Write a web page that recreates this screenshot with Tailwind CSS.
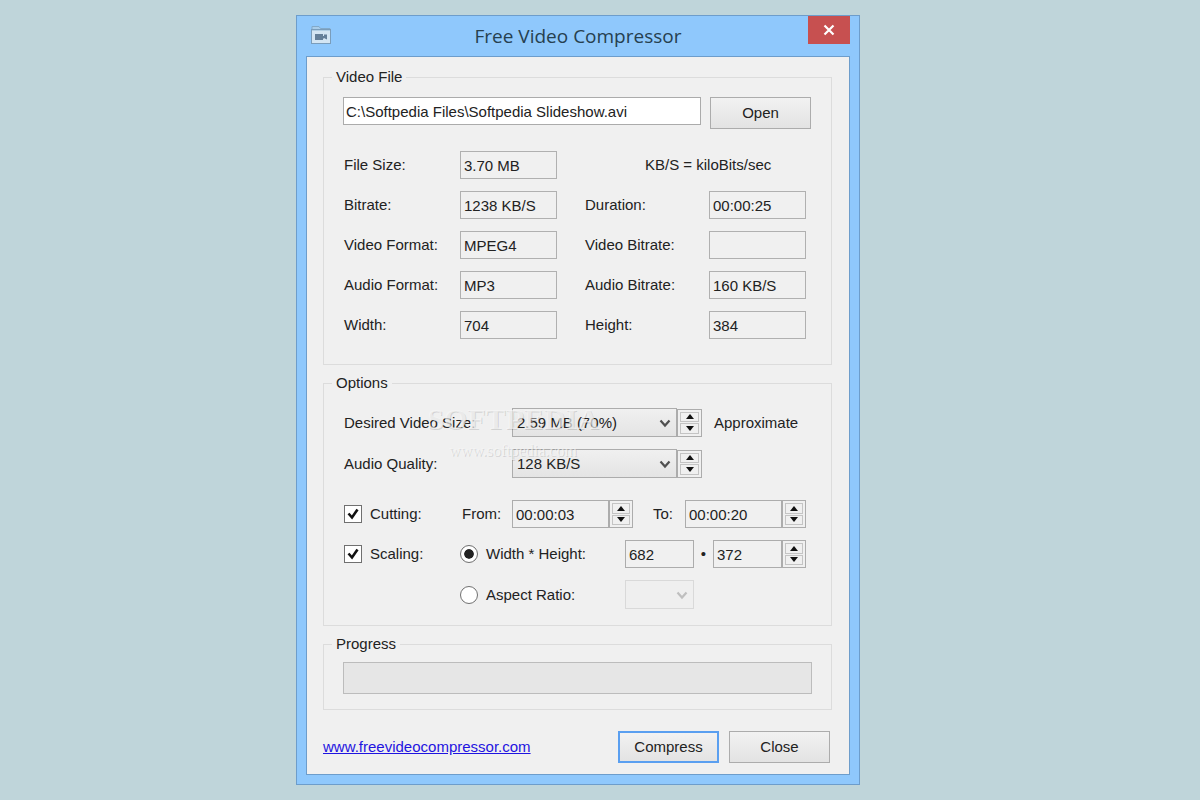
<!DOCTYPE html>
<html lang="en">
<head>
  <meta charset="UTF-8" />
  <meta name="viewport" content="width=device-width, initial-scale=1.0"/>
  <title>Free Video Compressor</title>
  <script src="https://cdn.jsdelivr.net/npm/@tailwindcss/browser@4"></script>
</head>
<body class="min-h-screen bg-[#bfd5da] flex items-start justify-center pt-[15px] font-['Liberation_Sans',Arial,sans-serif] text-[15px] leading-5 text-[#222]">
  <!-- Window -->
  <div class="w-[564px] ml-[-44px] bg-[#8fc8fc] border border-[#6d9dcb] px-[9px] pb-[9px]">
    <!-- Title bar -->
    <header class="relative h-10 flex items-center justify-center">
      <svg class="absolute left-[5px] top-[9px]" width="20" height="20" viewBox="0 0 20 20">
        <path d="M1 4.500V1.500h7l1.500 2H19v1z" fill="#a9cdea" stroke="#82a9c9"/>
        <rect x="0.500" y="4.500" width="19" height="14" fill="#d3e5f3" stroke="#7a9dbb"/>
        <path d="M1 5.500h18" stroke="#b2cfe4"/>
        <path d="M4 9h8v6H4zM12 11l1 0v2.500h-1zM13 9.500h3v5l-3-1.500z" fill="#647f99"/>
      </svg>
      <h1 class="font-['Open_Sans','Noto_Sans',sans-serif] text-[19px] text-[#26404f]">Free Video Compressor</h1>
      <button aria-label="Close window" class="absolute right-0 top-0 w-[42px] h-7 bg-[#c75050] flex items-center justify-center">
        <svg width="12" height="12" viewBox="0 0 12 12"><path d="M1.500 1.500l9 9M10.500 1.500l-9 9" stroke="#fff" stroke-width="2.200"/></svg>
      </button>
    </header>

    <main class="relative border border-[#6d9dcb] bg-[#f0f0f0] pl-4 pr-[17px] pt-2.5 pb-[11px]">
      <!-- Video file -->
      <fieldset class="border border-[#dcdcdc] pl-[19px] pr-5 pb-[25px]">
        <legend class="-ml-[11px] px-1 h-5">Video File</legend>
        <div class="pt-2.5 flex items-start gap-[9px]">
          <input type="text" aria-label="Video file" value="C:\Softpedia Files\Softpedia Slideshow.avi" class="flex-1 min-w-0 h-7 px-0.5 bg-white border border-[#ababab]"/>
          <button class="w-[101px] h-8 border border-[#acacac] bg-linear-to-b from-[#f2f2f2] to-[#e3e3e3]">Open</button>
        </div>
        <div class="mt-[22px] ml-px grid grid-cols-[116px_97px_28px_124px_97px] items-center gap-y-3">
          <label for="size">File Size:</label>
          <input id="size" readonly value="3.70 MB" class="w-full h-7 px-[3px] border border-[#b0b0b0]"/>
          <p class="col-span-3 pl-22">KB/S = kiloBits/sec</p>

          <label for="bitrate">Bitrate:</label>
          <input id="bitrate" readonly value="1238 KB/S" class="w-full h-7 px-[3px] border border-[#b0b0b0]"/>
          <label for="duration" class="col-start-4">Duration:</label>
          <input id="duration" readonly value="00:00:25" class="w-full h-7 px-[3px] border border-[#b0b0b0]"/>

          <label for="vformat">Video Format:</label>
          <input id="vformat" readonly value="MPEG4" class="w-full h-7 px-[3px] border border-[#b0b0b0]"/>
          <label for="vbitrate" class="col-start-4">Video Bitrate:</label>
          <input id="vbitrate" readonly value="" class="w-full h-7 px-[3px] border border-[#b0b0b0]"/>

          <label for="aformat">Audio Format:</label>
          <input id="aformat" readonly value="MP3" class="w-full h-7 px-[3px] border border-[#b0b0b0]"/>
          <label for="abitrate" class="col-start-4">Audio Bitrate:</label>
          <input id="abitrate" readonly value="160 KB/S" class="w-full h-7 px-[3px] border border-[#b0b0b0]"/>

          <label for="width">Width:</label>
          <input id="width" readonly value="704" class="w-full h-7 px-[3px] border border-[#b0b0b0]"/>
          <label for="height" class="col-start-4">Height:</label>
          <input id="height" readonly value="384" class="w-full h-7 px-[3px] border border-[#b0b0b0]"/>
        </div>
      </fieldset>

      <!-- Options -->
      <fieldset class="mt-2 border border-[#dcdcdc] pl-[20px] pr-[25px] pb-4">
        <legend class="-ml-3 px-1 h-5">Options</legend>
        <div class="pt-[15px] flex items-center">
          <label for="target" class="w-[168px]">Desired Video Size:</label>
          <div class="relative">
            <select id="target" class="appearance-none block w-[165px] h-[29px] px-1 border border-[#acacac] bg-linear-to-b from-[#f0f0f0] to-[#e4e4e4]"><option>2.59 MB (70%)</option></select>
            <svg class="absolute right-1.5 top-[11px] pointer-events-none" width="12" height="9" viewBox="0 0 12 9"><path d="M1.500 1.500L6 6.500l4.500-5" fill="none" stroke="#505050" stroke-width="2.200"/></svg>
          </div>
          <div class="w-[25px] h-7 border border-[#acacac] p-0.5 flex flex-col gap-px">
            <button aria-label="Larger" class="flex-1 flex items-center justify-center border border-[#c4c4c4]"><svg width="8" height="5" viewBox="0 0 8 5"><path d="M4 0l4 5H0z" fill="#111"/></svg></button>
            <button aria-label="Smaller" class="flex-1 flex items-center justify-center border border-[#c4c4c4]"><svg width="8" height="5" viewBox="0 0 8 5"><path d="M4 5l4-5H0z" fill="#111"/></svg></button>
          </div>
          <span class="ml-3">Approximate</span>
        </div>
        <div class="mt-3 flex items-center">
          <label for="quality" class="w-[168px]">Audio Quality:</label>
          <div class="relative">
            <select id="quality" class="appearance-none block w-[165px] h-[29px] px-1 border border-[#acacac] bg-linear-to-b from-[#f0f0f0] to-[#e4e4e4]"><option>128 KB/S</option></select>
            <svg class="absolute right-1.5 top-[11px] pointer-events-none" width="12" height="9" viewBox="0 0 12 9"><path d="M1.500 1.500L6 6.500l4.500-5" fill="none" stroke="#505050" stroke-width="2.200"/></svg>
          </div>
          <div class="w-[25px] h-7 border border-[#acacac] p-0.5 flex flex-col gap-px">
            <button aria-label="Higher" class="flex-1 flex items-center justify-center border border-[#c4c4c4]"><svg width="8" height="5" viewBox="0 0 8 5"><path d="M4 0l4 5H0z" fill="#111"/></svg></button>
            <button aria-label="Lower" class="flex-1 flex items-center justify-center border border-[#c4c4c4]"><svg width="8" height="5" viewBox="0 0 8 5"><path d="M4 5l4-5H0z" fill="#111"/></svg></button>
          </div>
        </div>

        <!-- Cutting -->
        <div class="mt-[22px] flex items-center">
          <label class="w-[118px] flex items-center gap-2">
            <span class="relative w-[18px] h-[18px]">
              <input type="checkbox" checked class="appearance-none block w-[18px] h-[18px] bg-white border border-[#707070]"/>
              <svg class="absolute left-[3px] top-[3px] pointer-events-none" width="12" height="12" viewBox="0 0 12 12"><path d="M1.500 5.500L5 9.500l5.500-8" fill="none" stroke="#111" stroke-width="2.600"/></svg>
            </span>
            Cutting:
          </label>
          <label for="from" class="w-[50px]">From:</label>
          <input id="from" value="00:00:03" class="w-[97px] h-7 px-[3px] border border-[#acacac]"/>
          <div class="w-6 h-7 border border-[#acacac] p-0.5 flex flex-col gap-px">
            <button aria-label="Start later" class="flex-1 flex items-center justify-center border border-[#c4c4c4]"><svg width="8" height="5" viewBox="0 0 8 5"><path d="M4 0l4 5H0z" fill="#111"/></svg></button>
            <button aria-label="Start earlier" class="flex-1 flex items-center justify-center border border-[#c4c4c4]"><svg width="8" height="5" viewBox="0 0 8 5"><path d="M4 5l4-5H0z" fill="#111"/></svg></button>
          </div>
          <label for="to" class="ml-auto w-8">To:</label>
          <input id="to" value="00:00:20" class="w-[97px] h-7 px-[3px] border border-[#acacac]"/>
          <div class="w-6 h-7 border border-[#acacac] p-0.5 flex flex-col gap-px">
            <button aria-label="End later" class="flex-1 flex items-center justify-center border border-[#c4c4c4]"><svg width="8" height="5" viewBox="0 0 8 5"><path d="M4 0l4 5H0z" fill="#111"/></svg></button>
            <button aria-label="End earlier" class="flex-1 flex items-center justify-center border border-[#c4c4c4]"><svg width="8" height="5" viewBox="0 0 8 5"><path d="M4 5l4-5H0z" fill="#111"/></svg></button>
          </div>
        </div>

        <!-- Scaling -->
        <div class="mt-3 flex items-center">
          <label class="w-[116px] flex items-center gap-2">
            <span class="relative w-[18px] h-[18px]">
              <input type="checkbox" checked class="appearance-none block w-[18px] h-[18px] bg-white border border-[#707070]"/>
              <svg class="absolute left-[3px] top-[3px] pointer-events-none" width="12" height="12" viewBox="0 0 12 12"><path d="M1.500 5.500L5 9.500l5.500-8" fill="none" stroke="#111" stroke-width="2.600"/></svg>
            </span>
            Scaling:
          </label>
          <label class="flex items-center gap-2">
            <input type="radio" name="mode" checked class="appearance-none w-[18px] h-[18px] rounded-full border border-[#707070] bg-[#222] bg-clip-content p-[3px] shadow-[inset_0_0_0_3px_#fff]"/>
            Width * Height:
          </label>
          <input aria-label="Scaled width" value="682" class="ml-auto w-[69px] h-7 px-[3px] border border-[#acacac]"/>
          <span class="w-[19px] text-center">•</span>
          <input aria-label="Scaled height" value="372" class="w-[69px] h-7 px-[3px] border border-[#acacac]"/>
          <div class="w-6 h-7 border border-[#acacac] p-0.5 flex flex-col gap-px">
            <button aria-label="Increase" class="flex-1 flex items-center justify-center border border-[#c4c4c4]"><svg width="8" height="5" viewBox="0 0 8 5"><path d="M4 0l4 5H0z" fill="#111"/></svg></button>
            <button aria-label="Decrease" class="flex-1 flex items-center justify-center border border-[#c4c4c4]"><svg width="8" height="5" viewBox="0 0 8 5"><path d="M4 5l4-5H0z" fill="#111"/></svg></button>
          </div>
        </div>
        <div class="mt-3 pl-[116px] pr-[112px] flex items-center justify-between">
          <label class="flex items-center gap-2">
            <input type="radio" name="mode" class="appearance-none w-[18px] h-[18px] rounded-full border border-[#707070] bg-white"/>
            Aspect Ratio:
          </label>
          <div class="relative">
            <select disabled aria-label="Aspect ratio" class="appearance-none block w-[69px] h-[29px] border border-[#d9d9d9] bg-[#efefef]"><option></option></select>
            <svg class="absolute right-1.5 top-[11px] pointer-events-none" width="12" height="9" viewBox="0 0 12 9"><path d="M1.500 1.500L6 6.500l4.500-5" fill="none" stroke="#bfbfbf" stroke-width="2.200"/></svg>
          </div>
        </div>
      </fieldset>

      <!-- Progress -->
      <fieldset class="mt-2 border border-[#dcdcdc] pl-[19px] pr-[19px] pt-2 pb-[15px]">
        <legend class="-ml-[11px] px-1 h-5">Progress</legend>
        <progress aria-label="Progress" value="0" max="100" class="appearance-none block w-full h-8 border border-[#bcbcbc] bg-[#e6e6e6] [&::-webkit-progress-bar]:bg-[#e6e6e6]"></progress>
      </fieldset>

      <footer class="mt-[21px] pr-0.5 flex items-center gap-2.5">
        <a href="#" class="mr-auto text-[#1f14e0] underline">www.freevideocompressor.com</a>
        <button class="w-[101px] h-8 border-2 border-[#5a9ff0] bg-linear-to-b from-[#f2f2f2] to-[#e3e3e3]">Compress</button>
        <button class="w-[101px] h-8 border border-[#acacac] bg-linear-to-b from-[#f2f2f2] to-[#e3e3e3]">Close</button>
      </footer>

      <!-- Watermark over the options -->
      <div class="absolute left-[116px] top-[346px] w-[180px] pointer-events-none text-center font-['Liberation_Serif',serif] text-[#f6f6f6]/70 [text-shadow:1px_1px_0_rgb(0_0_0/0.12)]">
        <p class="text-3xl leading-8 font-bold">SOFTPEDIA</p>
        <p class="mt-1 text-base leading-6">www.softpedia.com</p>
      </div>
    </main>
  </div>
</body>
</html>
